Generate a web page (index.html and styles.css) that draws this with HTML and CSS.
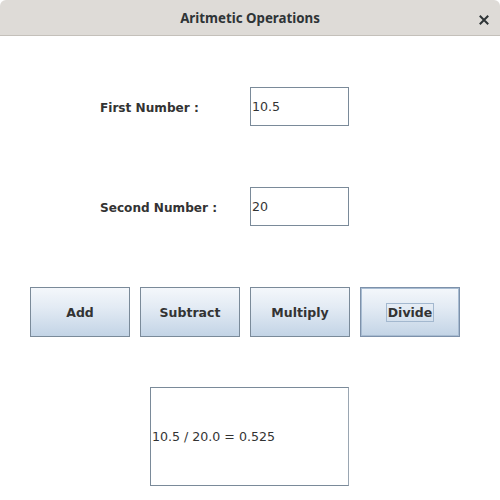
FILE: index.html
```html
<!DOCTYPE html>
<html lang="en">
<head>
    <meta charset="UTF-8">
    <meta name="viewport" content="width=device-width, initial-scale=1.0">
    <title>Aritmetic Operations</title>
    <link rel="stylesheet" href="styles.css">
</head>
<body>
    <div class="window">
        <div class="titlebar">
            <span class="title">Aritmetic Operations</span>
            <span class="close">
                <svg width="10" height="10" viewBox="0 0 10 10">
                    <path d="M1.5 1.5 L8.5 8.5 M8.5 1.5 L1.5 8.5" stroke="#2e3436" stroke-width="2" stroke-linecap="square"/>
                </svg>
            </span>
        </div>

        <div class="content">
            <div class="row first">
                <label for="firstNum">First Number :</label>
                <input type="text" id="firstNum" value="10.5">
            </div>
            <div class="row">
                <label for="secondNum">Second Number :</label>
                <input type="text" id="secondNum" value="20">
            </div>
            <div class="buttons">
                <button>Add</button>
                <button>Subtract</button>
                <button>Multiply</button>
                <button class="focused"><span class="focus-ring">Divide</span></button>
            </div>
            <div class="result">10.5 / 20.0 = 0.525</div>
        </div>
    </div>
</body>
</html>
```

FILE: styles.css
```css
body {
    margin: 0;
    background-color: #ffffff;
    font-family: "DejaVu Sans", sans-serif;
    font-size: 12.6px;
    color: #333333;
}
.window {
    width: 500px;
    height: 500px;
    background-color: #ffffff;
}
.titlebar {
    height: 36px;
    padding-top: 1px;
    box-sizing: border-box;
    background-color: #dedbd7;
    border-bottom: 1px solid #c4c0ba;
    border-radius: 6px 6px 0 0;
    display: flex;
    align-items: center;
    justify-content: center;
    position: relative;
}
.title {
    font-family: "Noto Sans", sans-serif;
    font-weight: 700;
    font-size: 13.3px;
    color: #2e3436;
}
.close {
    position: absolute;
    right: 11px;
    top: 13px;
    width: 10px;
    height: 10px;
}
.row {
    display: flex;
    align-items: center;
    padding-left: 100px;
    margin-top: 61px;
}
.row.first {
    margin-top: 51px;
}
.row label {
    width: 150px;
    padding-top: 2px;
    font-weight: bold;
    font-size: 12.1px;
    color: #333333;
}
.row input {
    box-sizing: border-box;
    width: 99px;
    height: 39px;
    margin: 0;
    padding: 0 1px;
    border: 1px solid #7a8a99;
    font-family: "DejaVu Sans", sans-serif;
    font-size: 12.6px;
    color: #333333;
    outline: none;
}
.buttons {
    display: flex;
    gap: 10px;
    padding-left: 30px;
    margin-top: 61px;
}
button {
    box-sizing: border-box;
    width: 100px;
    height: 50px;
    margin: 0;
    padding: 1px 0 0 0;
    border: 1px solid #7a8a99;
    background: linear-gradient(to bottom, #f4f7fb 0%, #e3ebf4 40%, #c3d4e6 100%);
    font-family: "DejaVu Sans", sans-serif;
    font-weight: bold;
    font-size: 12.5px;
    color: #333333;
}
button.focused {
    border-color: #7d91aa;
    box-shadow: inset 0 0 0 1px #a8bcd2;
}
.focus-ring {
    border: 1px solid #a3b8cf;
    padding: 1px 1px;
}
.result {
    box-sizing: border-box;
    width: 199px;
    height: 99px;
    margin: 50px 0 0 150px;
    border: 1px solid #7a8a99;
    border-right-color: #9aa6b2;
    display: flex;
    align-items: center;
    padding-left: 1px;
    font-size: 12.6px;
    color: #333333;
}
```
